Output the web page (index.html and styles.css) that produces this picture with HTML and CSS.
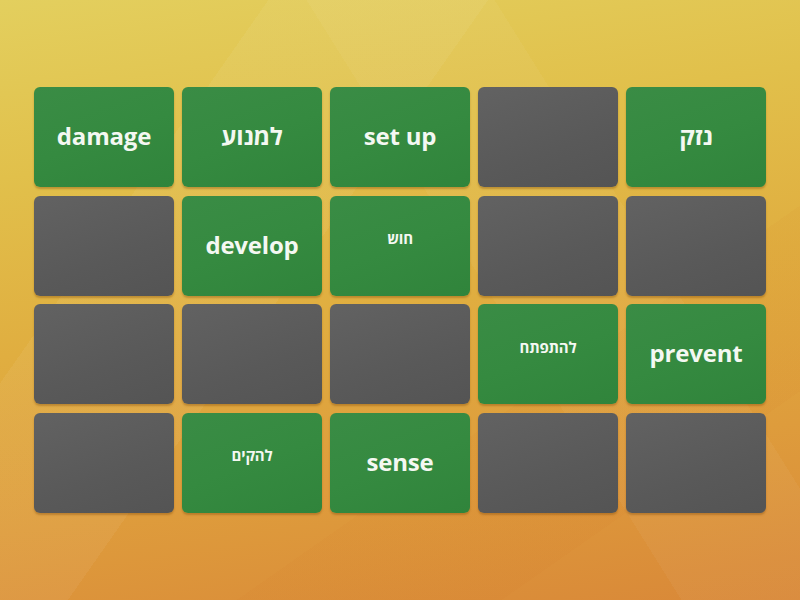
FILE: index.html
```html
<!DOCTYPE html>
<html lang="he">
<head>
<meta charset="utf-8">
<link rel="stylesheet" href="styles.css">
</head>
<body>
<div class="stage">
  <div class="grid">
    <div class="card open"><span class="word">damage</span></div>
    <div class="card open"><span class="word" dir="rtl">למנוע</span></div>
    <div class="card open"><span class="word">set up</span></div>
    <div class="card"></div>
    <div class="card open"><span class="word" dir="rtl">נזק</span></div>

    <div class="card"></div>
    <div class="card open"><span class="word">develop</span></div>
    <div class="card open"><span class="word small" dir="rtl">חוש</span></div>
    <div class="card"></div>
    <div class="card"></div>

    <div class="card"></div>
    <div class="card"></div>
    <div class="card"></div>
    <div class="card open"><span class="word small" dir="rtl">להתפתח</span></div>
    <div class="card open"><span class="word">prevent</span></div>

    <div class="card"></div>
    <div class="card open"><span class="word small" dir="rtl">להקים</span></div>
    <div class="card open"><span class="word">sense</span></div>
    <div class="card"></div>
    <div class="card"></div>
  </div>
</div>
</body>
</html>
```
FILE: styles.css
```css
html, body {
  margin: 0;
  padding: 0;
  width: 800px;
  height: 600px;
  overflow: hidden;
}
body {
  font-family: "Open Sans", "Noto Sans", sans-serif;
  background:
    linear-gradient(125deg, rgba(255,255,255,0) 0 22%, rgba(255,255,255,0.05) 22% 40%, rgba(255,255,255,0) 40% 100%),
    linear-gradient(58deg, rgba(255,255,255,0) 0 58%, rgba(255,255,255,0.04) 58% 74%, rgba(255,255,255,0) 74% 100%),
    linear-gradient(145deg, rgba(0,0,0,0) 0 66%, rgba(200,90,20,0.04) 66% 82%, rgba(0,0,0,0) 82% 100%),
    linear-gradient(172deg, #e3cf5e 0%, #e1c04b 25%, #e0ae40 50%, #de9c3c 75%, #d98838 100%);
}
.stage {
  padding: 87px 34px 0 34px;
}
.grid {
  display: grid;
  grid-template-columns: repeat(5, 140px);
  grid-template-rows: repeat(4, 100px);
  column-gap: 8px;
  row-gap: 8.67px;
}
.card {
  border-radius: 6px;
  background: linear-gradient(160deg, #626262 0%, #595959 60%, #545454 100%);
  box-shadow: 0 2px 2px rgba(120, 70, 10, 0.35);
  display: flex;
  align-items: center;
  justify-content: center;
}
.card.open {
  background: linear-gradient(160deg, #3a8c45 0%, #358a40 50%, #30843b 100%);
}
.word {
  color: #f4f8f2;
  font-weight: 700;
  font-size: 24px;
  letter-spacing: -0.2px;
  padding-bottom: 3px;
}
.word.small {
  font-size: 15px;
  padding-bottom: 15px;
}
```
